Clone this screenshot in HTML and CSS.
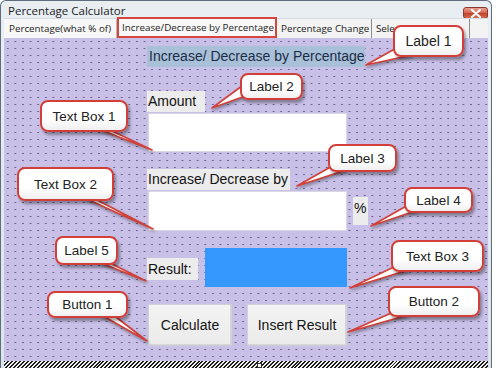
FILE: index.html
```html
<!DOCTYPE html>
<html>
<head>
<meta charset="utf-8">
<link rel="stylesheet" href="styles.css">
</head>
<body>
<div class="window">
  <div class="titlebar">
    <span class="title">Percentage Calculator</span>
    <div class="close"><svg width="12" height="9" viewBox="0 0 12 9"><path d="M2 1 L10 8 M10 1 L2 8" stroke="#fff" stroke-width="2.2" stroke-linecap="round"/></svg></div>
  </div>
  <div class="tabs">
    <div class="tab tab-first">Percentage(what % of)</div>
    <div class="tab tab-active">Increase/Decrease by Percentage</div>
    <div class="tab tab-third">Percentage Change</div>
    <div class="tab tab-fourth">Select Range</div>
  </div>
  <div class="canvas">
    <div class="heading">Increase/ Decrease by Percentage</div>
    <div class="lbl lbl-amount">Amount</div>
    <div class="textbox tb1"></div>
    <div class="lbl lbl-incdec">Increase/ Decrease by</div>
    <div class="row row2">
      <div class="textbox tb2"></div>
      <div class="lbl lbl-pct">%</div>
    </div>
    <div class="row row3">
      <div class="lbl lbl-result">Result:</div>
      <div class="textbox tb3"></div>
    </div>
    <div class="row row4">
      <div class="btn btn-calc">Calculate</div>
      <div class="btn btn-insert">Insert Result</div>
    </div>
  </div>
  <div class="hatch"><span class="handle"></span></div>
</div>

<svg class="tails" width="500" height="368" viewBox="0 0 500 368">
  <g fill="#fff" stroke="#d23f38" stroke-width="1.6" stroke-linejoin="round">
    <polygon points="400,46 412,55 366,65"/>
    <polygon points="246,83 248,95 212,108"/>
    <polygon points="96,128 110,130 152,150"/>
    <polygon points="334,165 346,170 297,186"/>
    <polygon points="80,196 95,199 153,229"/>
    <polygon points="410,204 418,210 371,226"/>
    <polygon points="96,261 108,262 146,281"/>
    <polygon points="398,265 408,270 350,288"/>
    <polygon points="98,313 112,314 147,341"/>
    <polygon points="396,311 408,315 348,332"/>
  </g>
</svg>

<div class="callout c-label1">Label 1</div>
<div class="callout c-label2">Label 2</div>
<div class="callout c-tb1">Text Box 1</div>
<div class="callout c-label3">Label 3</div>
<div class="callout c-tb2">Text Box 2</div>
<div class="callout c-label4">Label 4</div>
<div class="callout c-label5">Label 5</div>
<div class="callout c-tb3">Text Box 3</div>
<div class="callout c-btn1">Button 1</div>
<div class="callout c-btn2">Button 2</div>
</body>
</html>
```

FILE: styles.css
```css
html, body {
  margin: 0;
  padding: 0;
  background: #ffffff;
}
body {
  width: 500px;
  height: 368px;
  overflow: hidden;
  position: relative;
  font-family: "Liberation Sans", Arial, sans-serif;
}

.window {
  box-sizing: border-box;
  width: 492px;
  height: 368px;
  border: 1px solid #5f6d7c;
  border-bottom: 0;
  border-radius: 6px 6px 0 0;
  background: linear-gradient(#e9eef3, #dbe3eb);
  padding: 0 3px;
  display: flex;
  flex-direction: column;
}

.titlebar {
  height: 17px;
  display: flex;
  justify-content: space-between;
  align-items: flex-end;
}
.title {
  font-family: "Open Sans", "Noto Sans", sans-serif;
  font-size: 11.5px;
  color: #1b1b1b;
  padding-left: 4px;
  line-height: 15px;
  align-self: center;
  margin-top: 2px;
}
.close {
  width: 25px;
  height: 12px;
  box-sizing: border-box;
  border: 1px solid #8a3a2c;
  border-radius: 3px;
  background: linear-gradient(#e9a292, #d4604a 50%, #c0412a 51%, #d76b52);
  display: flex;
  align-items: center;
  justify-content: center;
  margin-bottom: -1px;
}

.tabs {
  height: 20px;
  background: #f3f3f3;
  display: flex;
  font-family: "Open Sans", "Noto Sans", sans-serif;
  font-size: 9.8px;
  color: #1b1b1b;
  border-top: 1px solid #d6dce3;
  box-sizing: border-box;
}
.tab {
  display: flex;
  align-items: center;
  box-sizing: border-box;
  white-space: nowrap;
  overflow: hidden;
}
.tab-first {
  width: 113px;
  padding-left: 5px;
  background: #f7f7f7;
  border-right: 1px solid #b9b9b9;
}
.tab-active {
  width: 160px;
  margin-top: -2px;
  height: 21px;
  border: 2px solid #d5443d;
  padding-left: 3px;
  background: #f8f8f8;
}
.tab-third {
  width: 95px;
  padding-left: 4px;
  border-right: 1px solid #8c8c8c;
}
.tab-fourth {
  width: 98px;
  padding-left: 4px;
  border-right: 1px solid #8c8c8c;
}

.canvas {
  flex: 1;
  background-color: #c8c0e7;
  background-image: radial-gradient(circle at center, rgba(70,60,105,0.85) 0, rgba(70,60,105,0.7) 0.5px, rgba(70,60,105,0) 1px);
  background-size: 7.6px 7px;
  padding: 8px 0 0 143px;
  display: flex;
  flex-direction: column;
  align-items: flex-start;
}

.heading {
  width: 218px;
  height: 21px;
  line-height: 21px;
  box-sizing: border-box;
  padding-left: 2px;
  background: #a8c0d8;
  color: #1d2c48;
  font-size: 14px;
  white-space: nowrap;
}

.lbl {
  background: #ececec;
  color: #111;
  font-size: 14px;
  height: 21px;
  line-height: 21px;
  box-sizing: border-box;
  padding-left: 1px;
  white-space: nowrap;
}
.lbl-amount {
  width: 58px;
  margin-top: 24px;
}
.lbl-incdec {
  width: 143px;
  margin-top: 17px;
}

.textbox {
  background: #ffffff;
  box-sizing: border-box;
  border: 1px solid #d9d7e4;
}
.tb1 {
  width: 199px;
  height: 39px;
  margin-left: 1px;
  margin-top: 1px;
}

.row {
  display: flex;
  align-items: flex-start;
}
.row2 {
  margin-top: 1px;
}
.tb2 {
  width: 199px;
  height: 40px;
  margin-left: 1px;
}
.lbl-pct {
  width: 15px;
  height: 28px;
  line-height: 22px;
  margin-left: 6px;
  margin-top: 6px;
  padding-left: 1px;
}

.row3 {
  margin-top: 17px;
}
.lbl-result {
  width: 51px;
  height: 22px;
  line-height: 22px;
  margin-top: 10px;
}
.tb3 {
  width: 142px;
  height: 39px;
  margin-left: 7px;
  background: #3399ff;
  border-color: #3399ff;
}

.row4 {
  margin-top: 17px;
}
.btn {
  height: 42px;
  box-sizing: border-box;
  background: linear-gradient(#f3f3f3, #ebebeb);
  border: 1px solid #cfcfd6;
  box-shadow: inset -1px -1px 0 #d6d6d6;
  display: flex;
  align-items: center;
  justify-content: center;
  font-size: 14px;
  color: #141414;
}
.btn-calc {
  width: 84px;
  margin-left: 1px;
}
.btn-insert {
  width: 100px;
  margin-left: 15px;
}

.hatch {
  height: 7px;
  position: relative;
  background: repeating-linear-gradient(135deg, #1d1d1d 0, #1d1d1d 1.4px, #f2f2f2 1.4px, #f2f2f2 2.8px);
}
.handle {
  position: absolute;
  left: 253px;
  top: 2px;
  width: 5px;
  height: 5px;
  background: #fff;
  border: 1px solid #333;
  box-sizing: border-box;
}

.tails {
  position: absolute;
  left: 0;
  top: 0;
  filter: drop-shadow(1px 2px 1.5px rgba(0,0,0,0.35));
}

.callout {
  position: absolute;
  box-sizing: border-box;
  border: 2px solid #d23f38;
  border-radius: 8px;
  background: linear-gradient(#ffffff, #ffffff 60%, #efefef);
  box-shadow: 2px 3px 3px rgba(0,0,0,0.35);
  display: flex;
  align-items: center;
  justify-content: center;
  font-family: "Liberation Sans", Arial, sans-serif;
  font-size: 13.5px;
  color: #222;
  white-space: nowrap;
}
.c-label1 { left: 393px; top: 25px; width: 71px; height: 32px; font-size: 14px; }
.c-label2 { left: 240px; top: 73px; width: 63px; height: 27px; }
.c-tb1 { left: 40px; top: 100px; width: 88px; height: 32px; }
.c-label3 { left: 328px; top: 144px; width: 69px; height: 28px; }
.c-tb2 { left: 17px; top: 167px; width: 97px; height: 34px; }
.c-label4 { left: 404px; top: 187px; width: 69px; height: 26px; }
.c-label5 { left: 55px; top: 236px; width: 63px; height: 29px; }
.c-tb3 { left: 391px; top: 240px; width: 93px; height: 32px; }
.c-btn1 { left: 47px; top: 291px; width: 81px; height: 27px; }
.c-btn2 { left: 388px; top: 286px; width: 92px; height: 31px; }
```
